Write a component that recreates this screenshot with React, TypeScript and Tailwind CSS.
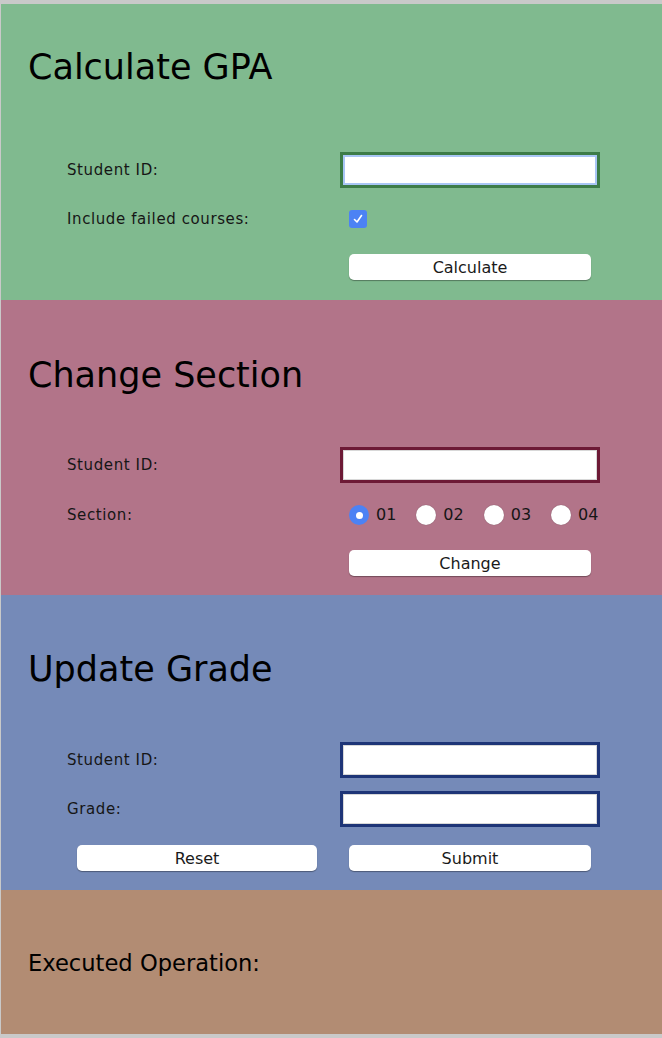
import React, { useState } from "react";

const font = { fontFamily: '"DejaVu Sans", "Lucida Grande", sans-serif' };

const Button = ({ label }: { label: string }) => (
  <button className="h-[26px] w-[242px] rounded-[5px] bg-white pt-[2px] text-[16px] leading-none text-[#1a1a1a] shadow-[0_1px_1px_rgba(0,0,0,0.35)]">
    {label}
  </button>
);

const Row = ({ label, children }: { label: string; children: React.ReactNode }) => (
  <div className="flex h-[36px] items-center pl-[66px]">
    <div className="w-[273px] text-[15px] tracking-[0.6px] text-[#161616]">{label}</div>
    {children}
  </div>
);

const Field = ({ border, focus }: { border: string; focus?: boolean }) => (
  <div className={`h-[36px] w-[260px] border-[3px] ${border} bg-white`}>
    <input
      className={`h-full w-full bg-white outline-none ${
        focus ? "border-2 border-[#a9c6f5]" : "border border-[#d8d8d8]"
      }`}
    />
  </div>
);

const App = () => {
  const [failed, setFailed] = useState(true);
  const [section, setSection] = useState("01");

  return (
    <div className="min-h-[1038px] bg-[#c9c9c9] pt-[4px] pb-[4px] pl-px" style={font}>
      {/* Calculate GPA */}
      <section className="flex h-[296px] flex-col bg-[#80ba8f] pt-[41px]">
        <h1 className="h-[44px] pl-[27px] text-[35px] leading-[44px] text-black">Calculate GPA</h1>
        <div className="mt-[63px]">
          <Row label="Student ID:">
            <Field border="border-[#3d7c48]" focus />
          </Row>
          <div className="mt-[13px]">
            <Row label="Include failed courses:">
              <button
                onClick={() => setFailed(!failed)}
                className="ml-[9px] flex h-[18px] w-[18px] items-center justify-center rounded-[3px] bg-[#4c82f4]"
              >
                {failed && (
                  <svg viewBox="0 0 12 12" className="h-[12px] w-[12px]">
                    <path d="M2.5 6.5 L5 9 L9.5 2.5" fill="none" stroke="white" strokeWidth="1.6" strokeLinecap="round" strokeLinejoin="round" />
                  </svg>
                )}
              </button>
            </Row>
          </div>
          <div className="mt-[17px] pl-[348px]">
            <Button label="Calculate" />
          </div>
        </div>
      </section>

      {/* Change Section */}
      <section className="flex h-[295px] flex-col bg-[#b27489] pt-[53px]">
        <h1 className="h-[44px] pl-[27px] text-[35px] leading-[44px] text-black">Change Section</h1>
        <div className="mt-[50px]">
          <Row label="Student ID:">
            <Field border="border-[#6d1a36]" />
          </Row>
          <div className="mt-[14px]">
            <Row label="Section:">
              <div className="ml-[9px] flex gap-[20px]">
                {["01", "02", "03", "04"].map((s) => (
                  <label key={s} className="flex cursor-pointer items-center gap-[7px]" onClick={() => setSection(s)}>
                    <span
                      className={`flex h-[20px] w-[20px] items-center justify-center rounded-full ${
                        section === s ? "bg-[#4c82f4]" : "bg-white shadow-[0_0_1px_rgba(0,0,0,0.4)]"
                      }`}
                    >
                      {section === s && <span className="h-[7px] w-[7px] rounded-full bg-white" />}
                    </span>
                    <span className="text-[16px] text-[#161616]">{s}</span>
                  </label>
                ))}
              </div>
            </Row>
          </div>
          <div className="mt-[17px] pl-[348px]">
            <Button label="Change" />
          </div>
        </div>
      </section>

      {/* Update Grade */}
      <section className="flex h-[295px] flex-col bg-[#758ab8] pt-[52px]">
        <h1 className="h-[44px] pl-[27px] text-[35px] leading-[44px] text-black">Update Grade</h1>
        <div className="mt-[51px]">
          <Row label="Student ID:">
            <Field border="border-[#1e3577]" />
          </Row>
          <div className="mt-[13px]">
            <Row label="Grade:">
              <Field border="border-[#1e3577]" />
            </Row>
          </div>
          <div className="mt-[18px] flex gap-[32px] pl-[76px]">
            <button className="h-[26px] w-[240px] rounded-[5px] bg-white pt-[2px] text-[16px] leading-none text-[#1a1a1a] shadow-[0_1px_1px_rgba(0,0,0,0.35)]">
              Reset
            </button>
            <Button label="Submit" />
          </div>
        </div>
      </section>

      {/* Output */}
      <section className="flex h-[144px] items-center bg-[#b28c73] pl-[27px] pt-[4px]">
        <div className="text-[22.6px] text-black">Executed Operation:</div>
      </section>
    </div>
  );
};

export default App;
